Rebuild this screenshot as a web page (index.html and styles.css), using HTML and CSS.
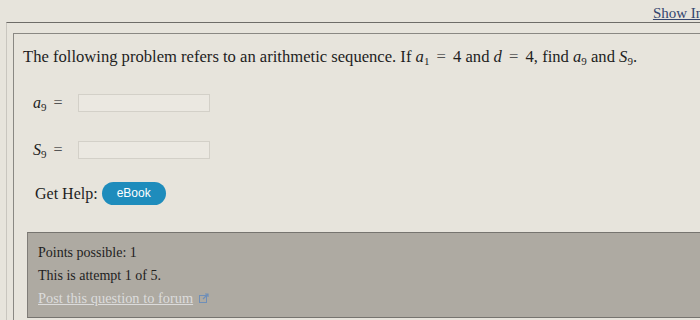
FILE: index.html
```html
<!DOCTYPE html>
<html lang="en">
<head>
    <meta charset="UTF-8">
    <title>Question</title>
    <link rel="stylesheet" href="styles.css">
</head>
<body>
    <div class="topbar">
        <a class="show-link" href="#">Show Intro/Instructions</a>
    </div>

    <div class="outer">
        <div class="question">
            <p class="prompt">The following problem refers to an arithmetic sequence. If <i>a</i><sub>1</sub> <span class="op">=</span> 4 and <i>d</i> <span class="op">=</span> 4, find <i>a</i><sub>9</sub> and <i>S</i><sub>9</sub>.</p>

            <div class="answer">
                <span class="label"><i>a</i><sub>9</sub> <span class="op">=</span></span>
                <input class="field" type="text">
            </div>

            <div class="answer">
                <span class="label"><i>S</i><sub>9</sub> <span class="op">=</span></span>
                <input class="field" type="text">
            </div>

            <div class="help">
                Get Help: <a class="ebook" href="#">eBook</a>
            </div>

            <div class="info">
                <div>Points possible: 1</div>
                <div>This is attempt 1 of 5.</div>
                <a class="forum" href="#">Post this question to forum</a>
                <svg class="ext" width="10" height="10" viewBox="0 0 10 10">
                    <rect x="0.5" y="2.5" width="7" height="7" fill="none" stroke="#6f8fb8" stroke-width="1"/>
                    <path d="M4 6 L9 1 M6 1 H9 V4" fill="none" stroke="#6f8fb8" stroke-width="1.2"/>
                </svg>
            </div>
        </div>
    </div>
</body>
</html>
```

FILE: styles.css
```css
html {
    overflow: hidden;
}

body {
    margin: 0;
    background-color: #e7e4dc;
    color: #1e1e1e;
    font-family: "Liberation Serif", "Times New Roman", serif;
    overflow: hidden;
    width: 700px;
    height: 320px;
}

.topbar {
    display: flex;
    justify-content: flex-end;
    height: 22px;
    overflow: hidden;
}

.show-link {
    font-size: 15px;
    line-height: 15px;
    margin-top: 6px;
    margin-right: -95px;
    color: #33456e;
    white-space: nowrap;
}

.outer {
    margin-left: 6px;
    border-top: 1px solid #6e6c68;
    border-left: 1px solid #c9c6bf;
    padding-top: 10px;
    overflow: hidden;
}

.question {
    margin-left: 6px;
    border-top: 1px solid #8a8883;
    border-left: 1px solid #8a8883;
    padding: 13px 0 3px 9px;
}

.prompt {
    margin: 0;
    font-size: 16.6px;
    line-height: 20px;
}

i {
    font-style: italic;
}

sub {
    font-size: 11px;
    vertical-align: -3px;
    line-height: 0;
}

.op {
    color: #555;
    padding: 0 3px;
}

.answer {
    display: flex;
    align-items: center;
    gap: 8px;
    padding-left: 10px;
    height: 18px;
    margin-top: 27px;
    font-size: 16px;
}

.answer + .answer {
    margin-top: 29px;
}

.label {
    width: 37px;
}

.field {
    width: 130px;
    height: 16px;
    margin: 0;
    padding: 0;
    border: 1px solid #d3d0c8;
    background-color: #ebe8e1;
}

.help {
    display: flex;
    align-items: center;
    gap: 4px;
    margin-top: 23px;
    padding-left: 12px;
    font-size: 16px;
}

.ebook {
    display: inline-block;
    background-color: #1e8cbc;
    color: #fff;
    font-family: "Liberation Sans", Arial, sans-serif;
    font-size: 12px;
    text-decoration: none;
    width: 64px;
    height: 23px;
    line-height: 23px;
    text-align: center;
    border-radius: 12px;
}

.info {
    margin-top: 27px;
    margin-left: 4px;
    background-color: #aeaaa2;
    border-top: 1px solid #76746f;
    border-left: 1px solid #807d78;
    border-bottom: 1px solid #76746f;
    padding: 8px 0 0 10px;
    height: 76px;
    box-sizing: border-box;
    height: 86px;
    font-size: 14px;
    line-height: 23px;
}

.forum {
    color: #dcdcdc;
    font-size: 14.4px;
}

.ext {
    vertical-align: 0;
    margin-left: 2px;
}
```
